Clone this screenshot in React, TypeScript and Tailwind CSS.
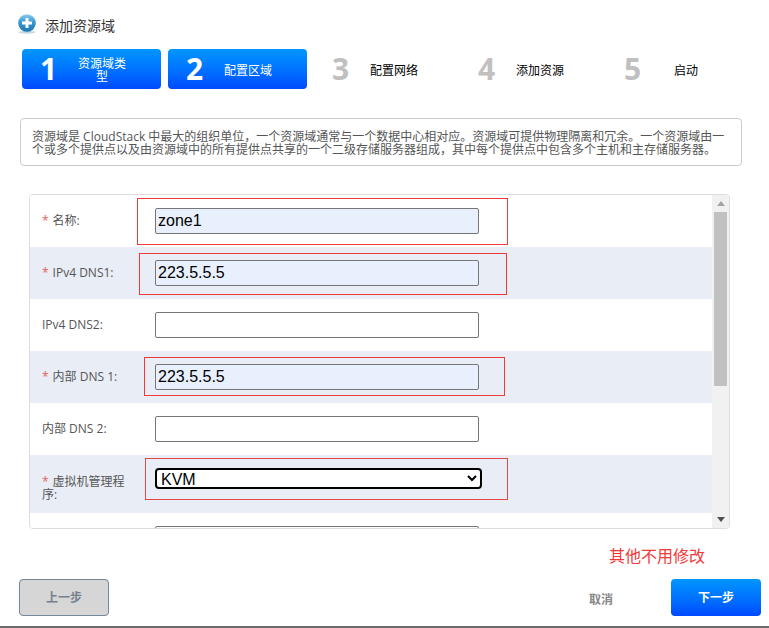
const sans = "font-['Open_Sans','Noto_Sans_CJK_SC',sans-serif]";

const steps = [
  { n: "1", label: "资源域类型", active: true },
  { n: "2", label: "配置区域", active: true },
  { n: "3", label: "配置网络", active: false },
  { n: "4", label: "添加资源", active: false },
  { n: "5", label: "启动", active: false },
];

function AddIcon() {
  return (
    <svg width="20" height="22" viewBox="0 0 20 22">
      <defs>
        <linearGradient id="ball" x1="0" y1="0" x2="0" y2="1">
          <stop offset="0" stopColor="#8ccbee" />
          <stop offset="0.45" stopColor="#3a9ad2" />
          <stop offset="1" stopColor="#1b74b0" />
        </linearGradient>
      </defs>
      <ellipse cx="10" cy="18.2" rx="8.5" ry="1.5" fill="#c4d6e2" />
      <circle cx="10" cy="9" r="8.8" fill="url(#ball)" />
      <path d="M8.5 4h3v3.5H15v3h-3.500V14h-3v-3.500H5v-3h3.500z" fill="#fff" />
    </svg>
  );
}

function Step({ n, label, active }: { n: string; label: string; active: boolean }) {
  return (
    <div
      className={
        active
          ? "flex h-10 w-[139px] items-center rounded-[4px] bg-gradient-to-b from-[#0096ff] to-[#0048ff] text-white"
          : "flex h-10 w-[139px] items-center text-black"
      }
    >
      <span
        className={
          active
            ? "w-[53px] text-center text-[30px] leading-none font-bold text-white"
            : "w-[53px] text-center text-[30px] leading-none font-bold text-[#c0c0c0]"
        }
      >
        {n}
      </span>
      <span className="ml-[1px] w-[52px] pt-[2px] text-center text-[12px] leading-[13px]">{label}</span>
    </div>
  );
}

function Row({
  label,
  required,
  shaded,
  tall,
  children,
}: {
  label: string;
  required?: boolean;
  shaded?: boolean;
  tall?: boolean;
  children: React.ReactNode;
}) {
  return (
    <div
      className={
        (shaded ? "bg-[#e9edf5] " : "bg-white ") +
        (tall ? "h-[58px] " : "h-[52px] ") +
        "relative flex shrink-0 items-start"
      }
    >
      <label
        className={
          (tall ? "pt-[20px] " : "pt-[19px] ") +
          "ml-[12px] w-[86px] shrink-0 text-[12px] leading-[13px] text-[#555]"
        }
      >
        {required && <span className="mr-[4px] text-[#e8605a]">*</span>}
        {label}
      </label>
      {children}
    </div>
  );
}

function TextInput({ value, filled }: { value?: string; filled?: boolean }) {
  return (
    <input
      readOnly
      value={value ?? ""}
      className={
        (filled ? "bg-[#e8f0fe] " : "bg-white ") +
        "mt-[13px] ml-[27px] h-[26px] w-[324px] rounded-[2px] border border-[#767676] px-[2px] font-['Liberation_Sans',sans-serif] text-[16px] text-black outline-none"
      }
    />
  );
}

export default function App() {
  return (
    <div className={sans + " relative h-[628px] w-[769px] overflow-hidden bg-white"}>
      <div className="box-content flex h-[22px] items-center pt-[14px] pl-[17px]">
        <AddIcon />
        <h1 className="ml-[8px] text-[14px] font-normal text-[#333]">添加资源域</h1>
      </div>

      <div className="mt-[13px] ml-[22px] flex gap-[7px]">
        {steps.map((s) => (
          <Step key={s.n} {...s} />
        ))}
      </div>

      <div className="mt-[29px] ml-[20px] h-[48px] w-[722px] rounded-[4px] border border-[#ccc] px-[11px] pt-[11px] text-[12px] leading-[13px] text-[#555]">
        资源域是 CloudStack 中最大的组织单位，一个资源域通常与一个数据中心相对应。资源域可提供物理隔离和冗余。一个资源域由一个或多个提供点以及由资源域中的所有提供点共享的一个二级存储服务器组成，其中每个提供点中包含多个主机和主存储服务器。
      </div>

      <div className="mt-[28px] ml-[29px] flex h-[335px] w-[701px] overflow-hidden rounded-[4px] border border-[#ddd]">
        <div className="flex min-w-0 flex-1 flex-col">
          <Row label="名称:" required>
            <TextInput value="zone1" filled />
            <div className="absolute top-[3px] left-[107px] h-[47px] w-[371px] border border-[#f03a3a]" />
          </Row>
          <Row label="IPv4 DNS1:" required shaded>
            <TextInput value="223.5.5.5" filled />
            <div className="absolute top-[6px] left-[109px] h-[42px] w-[368px] border border-[#f03a3a]" />
          </Row>
          <Row label="IPv4 DNS2:">
            <TextInput />
          </Row>
          <Row label="内部 DNS 1:" required shaded>
            <TextInput value="223.5.5.5" filled />
            <div className="absolute top-[6px] left-[114px] h-[39px] w-[361px] border border-[#f03a3a]" />
          </Row>
          <Row label="内部 DNS 2:">
            <TextInput />
          </Row>
          <Row label="虚拟机管理程序:" required shaded tall>
            <select className="mt-[13px] ml-[27px] h-[21px] w-[327px] rounded-[4px] border-2 border-black bg-white font-['Liberation_Sans',sans-serif] text-[16px] leading-none text-black outline-none">
              <option>KVM</option>
            </select>
            <div className="absolute top-[3px] left-[115px] h-[42px] w-[363px] border border-[#e0484a]" />
          </Row>
          <Row label="">
            <TextInput />
          </Row>
        </div>

        <div className="relative flex w-[17px] shrink-0 flex-col items-center bg-[#f1f1f1]">
          <svg width="8" height="5" viewBox="0 0 8 5" className="mt-[6px] shrink-0">
            <path d="M4 0l4 5H0z" fill="#a3a3a3" />
          </svg>
          <div className="mt-[6px] h-[174px] w-[13px] bg-[#c1c1c1]" />
          <svg width="8" height="5" viewBox="0 0 8 5" className="mt-auto mb-[6px] shrink-0">
            <path d="M0 0h8L4 5z" fill="#505050" />
          </svg>
        </div>
      </div>

      <div className="mt-[17px] mr-[64px] text-right text-[16px] leading-[20px] text-[#f03a3a]">其他不用修改</div>

      <div className="mt-[13px] flex items-center pr-[8px] pl-[19px]">
        <button className="h-[37px] w-[90px] rounded-[4px] border border-[#75889a] bg-[#d6d6d6] pt-[1px] text-[12px] font-bold text-[#75808c]">
          上一步
        </button>
        <button className="mr-[58px] ml-auto pt-[5px] text-[12px] font-bold text-[#888]">取消</button>
        <button className="h-[37px] w-[90px] rounded-[4px] bg-gradient-to-b from-[#0096ff] to-[#0048ff] text-[12px] font-bold text-white">
          下一步
        </button>
      </div>

      <div className="absolute right-0 bottom-0 left-0 h-[2px] bg-[#6b6b6b]" />
    </div>
  );
}
